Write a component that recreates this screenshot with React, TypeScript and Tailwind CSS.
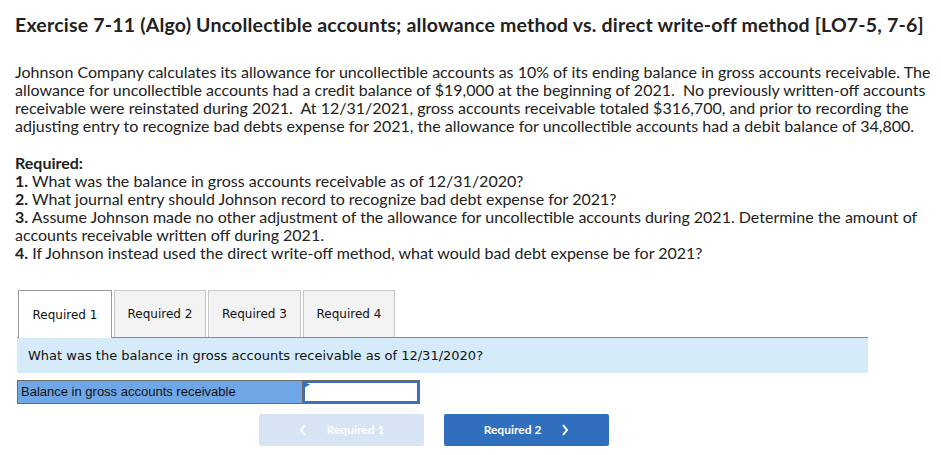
import React from "react";

const lato = { fontFamily: '"Lato", "Open Sans", sans-serif' };

export default function App() {
  return (
    <div className="w-[941px] h-[455px] bg-white overflow-hidden text-[#1f1f1f]" style={lato}>
      <h1 className="pl-[15px] pt-[13px] text-[19.5px] leading-[24px] tracking-[0.2px] font-bold whitespace-nowrap text-[#222]">
        Exercise 7-11 (Algo) Uncollectible accounts; allowance method vs. direct write-off method [LO7-5, 7-6]
      </h1>
      <p className="pl-[15px] mt-[26px] text-[16px] leading-[18px] whitespace-nowrap text-[#222]">
        Johnson Company calculates its allowance for uncollectible accounts as 10% of its ending balance in gross accounts receivable. The
        <br />
        allowance for uncollectible accounts had a credit balance of $19,000 at the beginning of 2021.&nbsp; No previously written-off accounts
        <br />
        receivable were reinstated during 2021.&nbsp; At 12/31/2021, gross accounts receivable totaled $316,700, and prior to recording the
        <br />
        adjusting entry to recognize bad debts expense for 2021, the allowance for uncollectible accounts had a debit balance of 34,800.
      </p>
      <div className="pl-[15px] mt-[19px] text-[16px] leading-[18px] whitespace-nowrap text-[#222]">
        <div className="font-bold">Required:</div>
        <div><b>1.</b> What was the balance in gross accounts receivable as of 12/31/2020?</div>
        <div><b>2.</b> What journal entry should Johnson record to recognize bad debt expense for 2021?</div>
        <div><b>3.</b> Assume Johnson made no other adjustment of the allowance for uncollectible accounts during 2021. Determine the amount of</div>
        <div>accounts receivable written off during 2021.</div>
        <div><b>4.</b> If Johnson instead used the direct write-off method, what would bad debt expense be for 2021?</div>
      </div>

      <div className="ml-[17px] mt-[28px] w-[851px]" style={{ fontFamily: '"DejaVu Sans", Verdana, sans-serif' }}>
        <div className="flex items-end gap-[2px] pl-[1px]">
          <div className="relative z-10 -mb-px w-[94px] h-[48px] bg-white border border-[#9a9a9a] border-b-0 flex items-center justify-center text-[12px] text-[#111]">
            Required 1
          </div>
          <div className="w-[92px] h-[47px] bg-[#f3f3f3] border border-[#c8c8c8] border-b-0 flex items-center justify-center text-[12px] text-[#111]">
            Required 2
          </div>
          <div className="w-[93px] h-[47px] bg-[#f3f3f3] border border-[#c8c8c8] border-b-0 flex items-center justify-center text-[12px] text-[#111]">
            Required 3
          </div>
          <div className="w-[92px] h-[47px] bg-[#f3f3f3] border border-[#c8c8c8] border-b-0 flex items-center justify-center text-[12px] text-[#111]">
            Required 4
          </div>
        </div>
        <div className="h-[36px] bg-[#d6ebf9] border-t border-[#8a8a8a] flex items-center pl-[11px] text-[13px] text-[#111]">
          What was the balance in gross accounts receivable as of 12/31/2020?
        </div>
        <div className="mt-[7px] flex h-[24px]">
          <div
            className="w-[286px] bg-[#6fa7e6] border border-[#6b6b6b] flex items-center pl-[3px] text-[13px] text-[#111]"
            style={{ fontFamily: '"Liberation Sans", Arial, sans-serif' }}
          >
            Balance in gross accounts receivable
          </div>
          <div className="relative w-[117px] bg-white border border-[#6b6b6b] border-l-0">
            <div className="absolute inset-0 border-2 border-[#3a70bd]"></div>
            <svg className="absolute left-[1px] top-[1px]" width="6" height="6" viewBox="0 0 6 6">
              <path d="M0 0 L6 2.5 L0 6 Z" fill="#2f6fc0" />
            </svg>
          </div>
        </div>
        <div className="mt-[10px] flex gap-[20px] pl-[242px]" style={lato}>
          <div className="w-[165px] h-[32px] rounded-[2px] bg-[#d6e4f3] flex items-center justify-center gap-[20px] text-white text-[12px] font-bold">
            <svg width="8" height="12" viewBox="0 0 8 12">
              <path d="M6 1 L2 6 L6 11" stroke="white" strokeWidth="2" fill="none" />
            </svg>
            <span>Required 1</span>
          </div>
          <div className="w-[165px] h-[32px] rounded-[2px] bg-[#2f6fbd] flex items-center justify-center gap-[20px] text-white text-[12px] font-bold">
            <span>Required 2</span>
            <svg width="8" height="12" viewBox="0 0 8 12">
              <path d="M2 1 L6 6 L2 11" stroke="white" strokeWidth="2" fill="none" />
            </svg>
          </div>
        </div>
      </div>
    </div>
  );
}
